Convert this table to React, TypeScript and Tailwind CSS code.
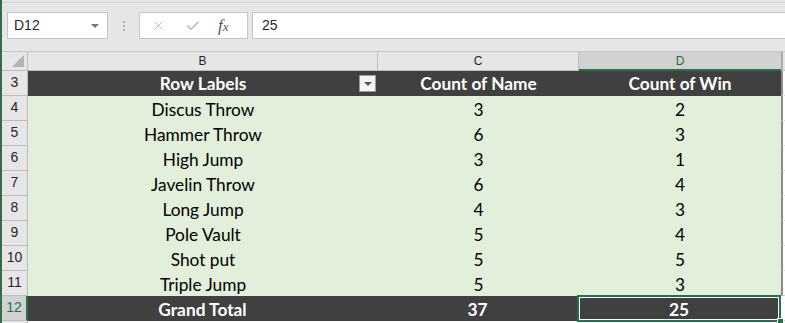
import { X, Check } from "lucide-react";

const rows = [
  { label: "Discus Throw", name: 3, win: 2 },
  { label: "Hammer Throw", name: 6, win: 3 },
  { label: "High Jump", name: 3, win: 1 },
  { label: "Javelin Throw", name: 6, win: 4 },
  { label: "Long Jump", name: 4, win: 3 },
  { label: "Pole Vault", name: 5, win: 4 },
  { label: "Shot put", name: 5, win: 5 },
  { label: "Triple Jump", name: 5, win: 3 },
];

const cellFont = { fontFamily: "Lato, 'Open Sans', sans-serif" };
const uiFont = { fontFamily: "'Liberation Sans', Arial, sans-serif" };

function RowNum({ n, active = false }: { n: number; active?: boolean }) {
  return (
    <div
      className={
        active
          ? "w-[26px] shrink-0 flex items-end justify-center pb-[2px] bg-[#d2d2d2] text-[#217346] border-r-2 border-[#217346] border-b border-b-[#bdbdbd] text-[14px]"
          : "w-[26px] shrink-0 flex items-end justify-center pb-[2px] bg-[#e6e6e6] text-[#262626] border-r border-b border-[#bdbdbd] text-[14px]"
      }
      style={uiFont}
    >
      {n}
    </div>
  );
}

function FilterButton() {
  return (
    <div className="w-[17px] h-[17px] bg-[#f4f4f4] border border-[#9a9a9a] flex items-center justify-center">
      <div className="w-0 h-0 border-l-[4px] border-r-[4px] border-t-[4px] border-l-transparent border-r-transparent border-t-[#555]" />
    </div>
  );
}

export default function App() {
  return (
    <div className="w-[785px] h-[323px] overflow-hidden bg-[#e6e6e6] border-l-2 border-[#2f6d4b] flex flex-col select-none">
      {/* formula bar */}
      <div className="h-[51px] shrink-0 flex flex-col">
        <div className="h-[3px] border-b border-[#d4d4d4]" />
        <div className="flex items-start pt-[9px]">
          <div
            className="ml-[5px] w-[101px] h-[27px] bg-white border border-[#c6c6c6] flex items-center justify-between pl-[6px] pr-[8px] text-[14px] text-[#262626]"
            style={uiFont}
          >
            <span>D12</span>
            <div className="w-0 h-0 border-l-[4px] border-r-[4px] border-t-[4px] border-l-transparent border-r-transparent border-t-[#777]" />
          </div>
          <div className="w-[31px] h-[27px] flex flex-col items-center justify-center gap-[2px]">
            <div className="w-[2px] h-[2px] bg-[#b0b0b0]" />
            <div className="w-[2px] h-[2px] bg-[#b0b0b0]" />
            <div className="w-[2px] h-[2px] bg-[#b0b0b0]" />
          </div>
          <div className="w-[109px] h-[27px] bg-white border border-[#c6c6c6] flex items-center pl-[11px]">
            <X size={15} strokeWidth={1.4} className="text-[#b4b4b4]" />
            <Check size={16} strokeWidth={2.2} className="ml-[19px] text-[#b8b8b8]" />
            <span
              className="ml-[17px] text-[17px] italic text-[#555] leading-none"
              style={{ fontFamily: "'Liberation Serif', serif" }}
            >
              f<span className="text-[13px]">x</span>
            </span>
          </div>
          <div
            className="ml-[4px] flex-1 h-[27px] bg-white border border-[#c6c6c6] border-r-0 flex items-center pl-[9px] text-[14px] text-[#262626]"
            style={uiFont}
          >
            25
          </div>
        </div>
      </div>

      {/* column headers */}
      <div className="h-[20px] shrink-0 flex border-t border-[#c6c6c6] text-[12px] text-[#262626]" style={uiFont}>
        <div className="w-[26px] shrink-0 border-r border-b border-[#bdbdbd] relative">
          <div
            className="absolute right-[3px] bottom-[3px] w-0 h-0"
            style={{ borderBottom: "12px solid #b4b4b4", borderLeft: "12px solid transparent" }}
          />
        </div>
        <div className="w-[350px] shrink-0 flex items-center justify-center border-r border-b border-[#bdbdbd]">B</div>
        <div className="w-[201px] shrink-0 flex items-center justify-center border-r border-b border-[#bdbdbd]">C</div>
        <div className="w-[202px] shrink-0 flex items-center justify-center bg-[#d2d2d2] text-[#217346] border-b-2 border-[#217346]">D</div>
        <div className="flex-1 border-l-2 border-[#ababab] border-b border-b-[#bdbdbd]" />
      </div>

      {/* pivot table */}
      <div className="flex-1 flex flex-col" style={cellFont}>
        <div className="h-[25px] shrink-0 flex">
          <RowNum n={3} />
          <div className="w-[350px] shrink-0 bg-[#404040] flex items-center text-white font-bold text-[17.3px]">
            <span className="flex-1 text-center pl-[19px]">Row Labels</span>
            <div className="mr-[2px]">
              <FilterButton />
            </div>
          </div>
          <div className="w-[201px] shrink-0 bg-[#404040] flex items-center justify-center text-white font-bold text-[17.3px]">
            Count of Name
          </div>
          <div className="w-[202px] shrink-0 bg-[#404040] flex items-center justify-center text-white font-bold text-[17.3px]">
            Count of Win
          </div>
          <div className="flex-1 bg-white border-l-2 border-[#8c8c8c] border-b border-b-[#d4d4d4]" />
        </div>

        {rows.map((r, i) => (
          <div key={r.label} className="h-[25px] shrink-0 flex">
            <RowNum n={i + 4} />
            <div className="w-[350px] shrink-0 bg-[#e2efda] flex items-center justify-center pt-[2px] text-[17.3px] text-black">
              {r.label}
            </div>
            <div className="w-[201px] shrink-0 bg-[#e2efda] flex items-center justify-center pt-[2px] text-[17.3px] text-black">
              {r.name}
            </div>
            <div className="w-[202px] shrink-0 bg-[#e2efda] flex items-center justify-center pt-[2px] text-[17.3px] text-black">
              {r.win}
            </div>
            <div className="flex-1 bg-white border-l-2 border-[#8c8c8c] border-b border-b-[#d4d4d4]" />
          </div>
        ))}

        <div className="h-[25px] shrink-0 flex">
          <RowNum n={12} active />
          <div className="w-[349px] shrink-0 bg-[#404040] flex items-center justify-center pt-[2px] text-white font-bold text-[17.3px]">
            Grand Total
          </div>
          <div className="w-[201px] shrink-0 bg-[#404040] flex items-center justify-center pt-[2px] text-white font-bold text-[17.3px]">
            37
          </div>
          <div className="w-[202px] shrink-0 bg-[#404040] relative flex items-center justify-center pt-[2px] text-white font-bold text-[17.3px]">
            25
            {/* active cell outline + fill handle */}
            <div className="absolute -left-[1px] -top-[1px] -right-[1px] -bottom-[1px] border-2 border-[#217346]">
              <div className="absolute inset-0 border border-white" />
            </div>
            <div className="absolute -right-[4px] -bottom-[4px] w-[7px] h-[7px] bg-[#217346] border border-white" />
          </div>
          <div className="flex-1 bg-white border-b border-[#d4d4d4]" />
        </div>

        <div className="flex-1 flex">
          <div className="w-[26px] shrink-0 bg-[#e6e6e6] border-r border-[#bdbdbd]" />
          <div className="flex-1 bg-white" />
        </div>
      </div>
    </div>
  );
}
